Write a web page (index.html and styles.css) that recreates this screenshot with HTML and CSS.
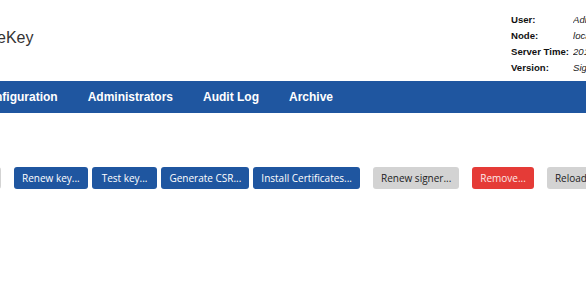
FILE: index.html
```html
<!DOCTYPE html>
<html>
<head>
<meta charset="utf-8">
<link rel="stylesheet" href="styles.css">
</head>
<body>
<div class="page">
  <header class="header">
    <h1 class="title">eKey</h1>
    <table class="info">
      <tr><th>User:</th><td>Administrator</td></tr>
      <tr><th>Node:</th><td>localhost</td></tr>
      <tr><th>Server Time:</th><td>2015-06-01 12:00:00</td></tr>
      <tr><th>Version:</th><td>Signer 1.0</td></tr>
    </table>
  </header>
  <nav class="nav">
    <a class="nav-item">Configuration</a>
    <a class="nav-item">Administrators</a>
    <a class="nav-item">Audit Log</a>
    <a class="nav-item">Archive</a>
  </nav>
  <main class="main">
    <div class="actions">
      <button class="btn btn-grey btn-cut">Activate...</button>
      <div class="group">
        <button class="btn btn-blue">Renew key...</button>
        <button class="btn btn-blue btn-test">Test key...</button>
        <button class="btn btn-blue">Generate CSR...</button>
        <button class="btn btn-blue">Install Certificates...</button>
      </div>
      <button class="btn btn-grey">Renew signer...</button>
      <button class="btn btn-red">Remove...</button>
      <button class="btn btn-grey">Reload</button>
    </div>
  </main>
</div>
</body>
</html>
```
FILE: styles.css
```css
html, body {
  margin: 0;
  padding: 0;
  background: #ffffff;
}
.page {
  width: 586px;
  height: 308px;
  overflow: hidden;
  font-family: "Liberation Sans", Arial, sans-serif;
}
.header {
  height: 81px;
  display: flex;
  justify-content: space-between;
  align-items: flex-start;
}
.title {
  margin: 28px 0 0 -3px;
  font-size: 16px;
  font-weight: normal;
  color: #333333;
  line-height: 20px;
}
.info {
  margin-top: 11px;
  border-collapse: collapse;
  font-size: 9.6px;
  width: 75px;
  table-layout: fixed;
  white-space: nowrap;
}
.info th {
  text-align: left;
  font-weight: bold;
  color: #111111;
  padding: 0 3px 0 0;
  height: 16px;
  width: 59px;
}
.info td {
  font-style: italic;
  color: #222222;
  padding: 0;
  overflow: hidden;
}
.nav {
  height: 32px;
  background: #1f56a0;
  display: flex;
  align-items: center;
  margin-left: -36px;
}
.nav-item {
  color: #ffffff;
  font-weight: bold;
  font-size: 12px;
  padding: 0 15px;
  white-space: nowrap;
}
.main {
  padding-top: 54px;
}
.actions {
  display: flex;
  align-items: center;
  gap: 13px;
  white-space: nowrap;
}
.group {
  display: flex;
  gap: 4px;
}
.btn {
  height: 22px;
  border: none;
  border-radius: 3px;
  padding: 0 8px;
  font-family: "Open Sans", sans-serif;
  font-size: 10px;
  line-height: 22px;
  flex: none;
}
.btn-test {
  padding: 0 10px;
}
.btn-blue {
  background: #1f56a0;
  color: #ffffff;
}
.btn-grey {
  background: #d3d3d3;
  color: #222222;
}
.btn-red {
  background: #e53b37;
  color: #fde8e8;
}
.btn-cut {
  margin-left: -70px;
  width: 71px;
}
```
